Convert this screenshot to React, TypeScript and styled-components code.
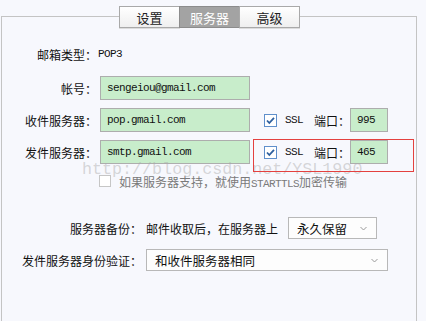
import React from "react";
import styled, { createGlobalStyle } from "styled-components";

const GlobalStyle = createGlobalStyle`
  html, body {
    margin: 0;
    padding: 0;
    background: #f7f8fd;
  }
  body {
    font-family: "Noto Sans CJK SC", "Noto Sans", sans-serif;
    font-size: 12px;
    color: #111;
  }
`;

const mono = `
  font-family: "Liberation Mono", "DejaVu Sans Mono", monospace;
  font-size: 11px;
  letter-spacing: -0.6px;
`;

const Page = styled.div`
  position: relative;
  width: 426px;
  height: 321px;
  overflow: hidden;
  display: flex;
  flex-direction: column;
  background: #f7f8fd;
`;

const TabBar = styled.div`
  position: relative;
  z-index: 1;
  display: flex;
  height: 22px;
  margin: 6px 0 0 120px;
`;

const Tab = styled.div<{ $active?: boolean }>`
  box-sizing: border-box;
  width: 61px;
  height: 22px;
  margin-left: -1px;
  display: flex;
  align-items: center;
  justify-content: center;
  font-size: 13px;
  border: 1px solid ${(p) => (p.$active ? "#8c8c8c" : "#a9a9a9")};
  color: ${(p) => (p.$active ? "#fff" : "#222")};
  background: ${(p) =>
    p.$active ? "#a3a3a3" : "linear-gradient(#ffffff, #efefef)"};
  box-shadow: ${(p) => (p.$active ? "none" : "0 1px 0 #dcdcdc")};
`;

const Panel = styled.div`
  box-sizing: border-box;
  flex: 1;
  width: 416px;
  margin: -12px 0 0 1px;
  padding-top: 25px;
  border: 1px solid #c4c4c4;
  border-bottom: none;
`;

const Row = styled.div<{ $gap?: number }>`
  display: flex;
  align-items: center;
  height: 24px;
  margin-top: ${(p) => p.$gap ?? 0}px;
`;

const Label = styled.div<{ $width?: number }>`
  width: ${(p) => p.$width ?? 95}px;
  text-align: right;
  white-space: nowrap;
`;

const Mono = styled.span<{ $ml?: number }>`
  ${mono}
  margin-left: ${(p) => p.$ml ?? 0}px;
`;

const Field = styled.input<{ $width: number; $ml?: number }>`
  box-sizing: border-box;
  width: ${(p) => p.$width}px;
  height: 24px;
  margin: 0 0 0 ${(p) => p.$ml ?? 0}px;
  padding: 0 0 0 6px;
  border: 1px solid #adadad;
  background: #c8edcb;
  color: #111;
  outline: none;
  ${mono}
`;

const Check = styled.span<{ $ml?: number; $disabled?: boolean }>`
  display: inline-flex;
  margin-left: ${(p) => p.$ml ?? 0}px;
  width: ${(p) => (p.$disabled ? 12 : 13)}px;
  height: ${(p) => (p.$disabled ? 12 : 13)}px;
`;

const PortLabel = styled.span`
  margin-left: 11px;
  width: 36px;
  white-space: nowrap;
`;

const TlsRow = styled.div`
  display: flex;
  align-items: center;
  height: 22px;
  margin: 6px 0 0 97px;
  color: #7a7a7a;
`;

const TlsText = styled.span`
  margin-left: 8px;
  white-space: nowrap;
`;

const Bottom = styled.div`
  display: flex;
  flex-direction: column;
  gap: 10px;
  margin-top: 25px;
`;

const SelectRow = styled.div`
  display: flex;
  align-items: center;
  height: 22px;
`;

const Plain = styled.span`
  margin-left: 4px;
  white-space: nowrap;
`;

const Select = styled.div<{ $width: number; $ml?: number }>`
  box-sizing: border-box;
  display: flex;
  align-items: center;
  justify-content: space-between;
  width: ${(p) => p.$width}px;
  height: 22px;
  margin-left: ${(p) => p.$ml ?? 0}px;
  padding: 0 9px 0 8px;
  border: 1px solid #b8b8b8;
  background: #fdfdfd;
  font-size: 12.5px;
  color: #111;
`;

const Annotation = styled.div`
  position: absolute;
  left: 253px;
  top: 139px;
  width: 159px;
  height: 31px;
  border: 1px solid #e4413f;
  pointer-events: none;
`;

const Watermark = styled.div`
  position: absolute;
  left: 82px;
  top: 160px;
  font-family: "Liberation Mono", "DejaVu Sans Mono", monospace;
  font-size: 16.7px;
  color: rgba(170, 170, 170, 0.45);
  white-space: nowrap;
  pointer-events: none;
`;

const CheckBox: React.FC<{ checked?: boolean; ml?: number }> = ({ checked, ml }) =>
  checked ? (
    <Check $ml={ml}>
      <svg width="13" height="13" viewBox="0 0 13 13">
        <rect x="0.5" y="0.5" width="12" height="12" fill="#fff" stroke="#5f8fcb" />
        <path d="M3 6.5 L5.3 9 L10 3.8" fill="none" stroke="#2e5f9e" strokeWidth="1.8" />
      </svg>
    </Check>
  ) : (
    <Check $ml={ml} $disabled>
      <svg width="12" height="12" viewBox="0 0 12 12">
        <rect x="0.5" y="0.5" width="11" height="11" fill="#fff" stroke="#c6c6c6" />
      </svg>
    </Check>
  );

const Chevron = () => (
  <svg width="7" height="5" viewBox="0 0 7 5">
    <path d="M0.5 1 L3.5 4 L6.5 1" fill="none" stroke="#9a9a9a" strokeWidth="1" />
  </svg>
);

export default function App() {
  return (
    <>
      <GlobalStyle />
      <Page>
        <TabBar>
          <Tab>设置</Tab>
          <Tab $active>服务器</Tab>
          <Tab>高级</Tab>
        </TabBar>
        <Panel>
          <Row>
            <Label>邮箱类型：</Label>
            <Mono $ml={1}>POP3</Mono>
          </Row>
          <Row $gap={10}>
            <Label>帐号：</Label>
            <Field $width={150} $ml={3} readOnly value="sengeiou@gmail.com" />
          </Row>
          <Row $gap={8}>
            <Label>收件服务器：</Label>
            <Field $width={150} $ml={3} readOnly value="pop.gmail.com" />
            <CheckBox checked ml={14} />
            <Mono $ml={8}>SSL</Mono>
            <PortLabel>端口：</PortLabel>
            <Field $width={38} readOnly value="995" />
          </Row>
          <Row $gap={8}>
            <Label>发件服务器：</Label>
            <Field $width={150} $ml={3} readOnly value="smtp.gmail.com" />
            <CheckBox checked ml={14} />
            <Mono $ml={8}>SSL</Mono>
            <PortLabel>端口：</PortLabel>
            <Field $width={38} readOnly value="465" />
          </Row>
          <TlsRow>
            <CheckBox />
            <TlsText>
              如果服务器支持，就使用<Mono>STARTTLS</Mono>加密传输
            </TlsText>
          </TlsRow>
          <Bottom>
            <SelectRow>
              <Label $width={140}>服务器备份：</Label>
              <Plain>邮件收取后，在服务器上</Plain>
              <Select $width={89} $ml={10}>
                永久保留
                <Chevron />
              </Select>
            </SelectRow>
            <SelectRow>
              <Label $width={140}>发件服务器身份验证：</Label>
              <Select $width={242} $ml={4}>
                和收件服务器相同
                <Chevron />
              </Select>
            </SelectRow>
          </Bottom>
        </Panel>
        <Watermark>http://blog.csdn.net/YSL1990</Watermark>
        <Annotation />
      </Page>
    </>
  );
}
